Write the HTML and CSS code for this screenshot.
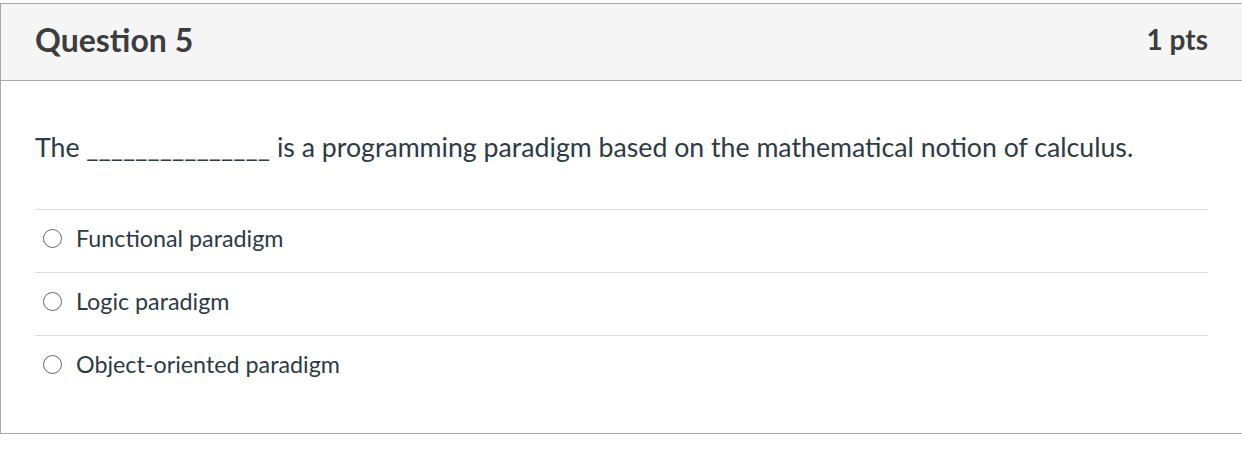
FILE: index.html
```html
<!DOCTYPE html>
<html>
<head>
<meta charset="utf-8">
<link rel="stylesheet" href="styles.css">
</head>
<body>
<div class="card">
  <div class="card-header">
    <h2 class="title">Question 5</h2>
    <span class="pts">1 pts</span>
  </div>
  <div class="card-body">
    <p class="question">The _______________ is a programming paradigm based on the mathematical notion of calculus.</p>
    <div class="answers">
      <label class="answer"><span class="radio"></span><span class="answer-text">Functional paradigm</span></label>
      <label class="answer"><span class="radio"></span><span class="answer-text">Logic paradigm</span></label>
      <label class="answer"><span class="radio"></span><span class="answer-text">Object-oriented paradigm</span></label>
    </div>
  </div>
</div>
</body>
</html>
```
FILE: styles.css
```css
html, body {
  margin: 0;
  padding: 0;
  background: #fff;
}
body {
  font-family: Lato, "Open Sans", sans-serif;
  color: #2d3b45;
}
.card {
  margin-top: 3px;
  width: 1241px;
  border-top: 1px solid #a9a9a9;
  border-left: 1px solid #a9a9a9;
  border-bottom: 1px solid #a9a9a9;
}
.card-header {
  height: 72px;
  padding: 0 34px 4px 34px;
  background: #f5f5f5;
  border-bottom: 1px solid #a9a9a9;
  display: flex;
  align-items: center;
  justify-content: space-between;
}
.title {
  margin: 0;
  font-size: 32px;
  font-weight: 700;
  line-height: 1.2;
  color: #3d3d3d;
}
.pts {
  font-size: 28px;
  font-weight: 700;
  line-height: 1.2;
  color: #3d3d3d;
}
.card-body {
  padding: 0 34px 35px 34px;
}
.question {
  margin: 0;
  padding: 48px 0 44px 0;
  font-size: 26.7px;
  line-height: 36px;
}
.answers {
  display: flex;
  flex-direction: column;
}
.answer {
  display: flex;
  align-items: center;
  gap: 14px;
  height: 57px;
  padding-bottom: 5px;
  border-top: 1px solid #dcdcdc;
  padding-left: 8px;
  font-size: 23.3px;
}
.radio {
  width: 17px;
  height: 17px;
  border: 1.5px solid #666;
  border-radius: 50%;
  flex: none;
}
.answer-text {
  line-height: 1.2;
}
```
